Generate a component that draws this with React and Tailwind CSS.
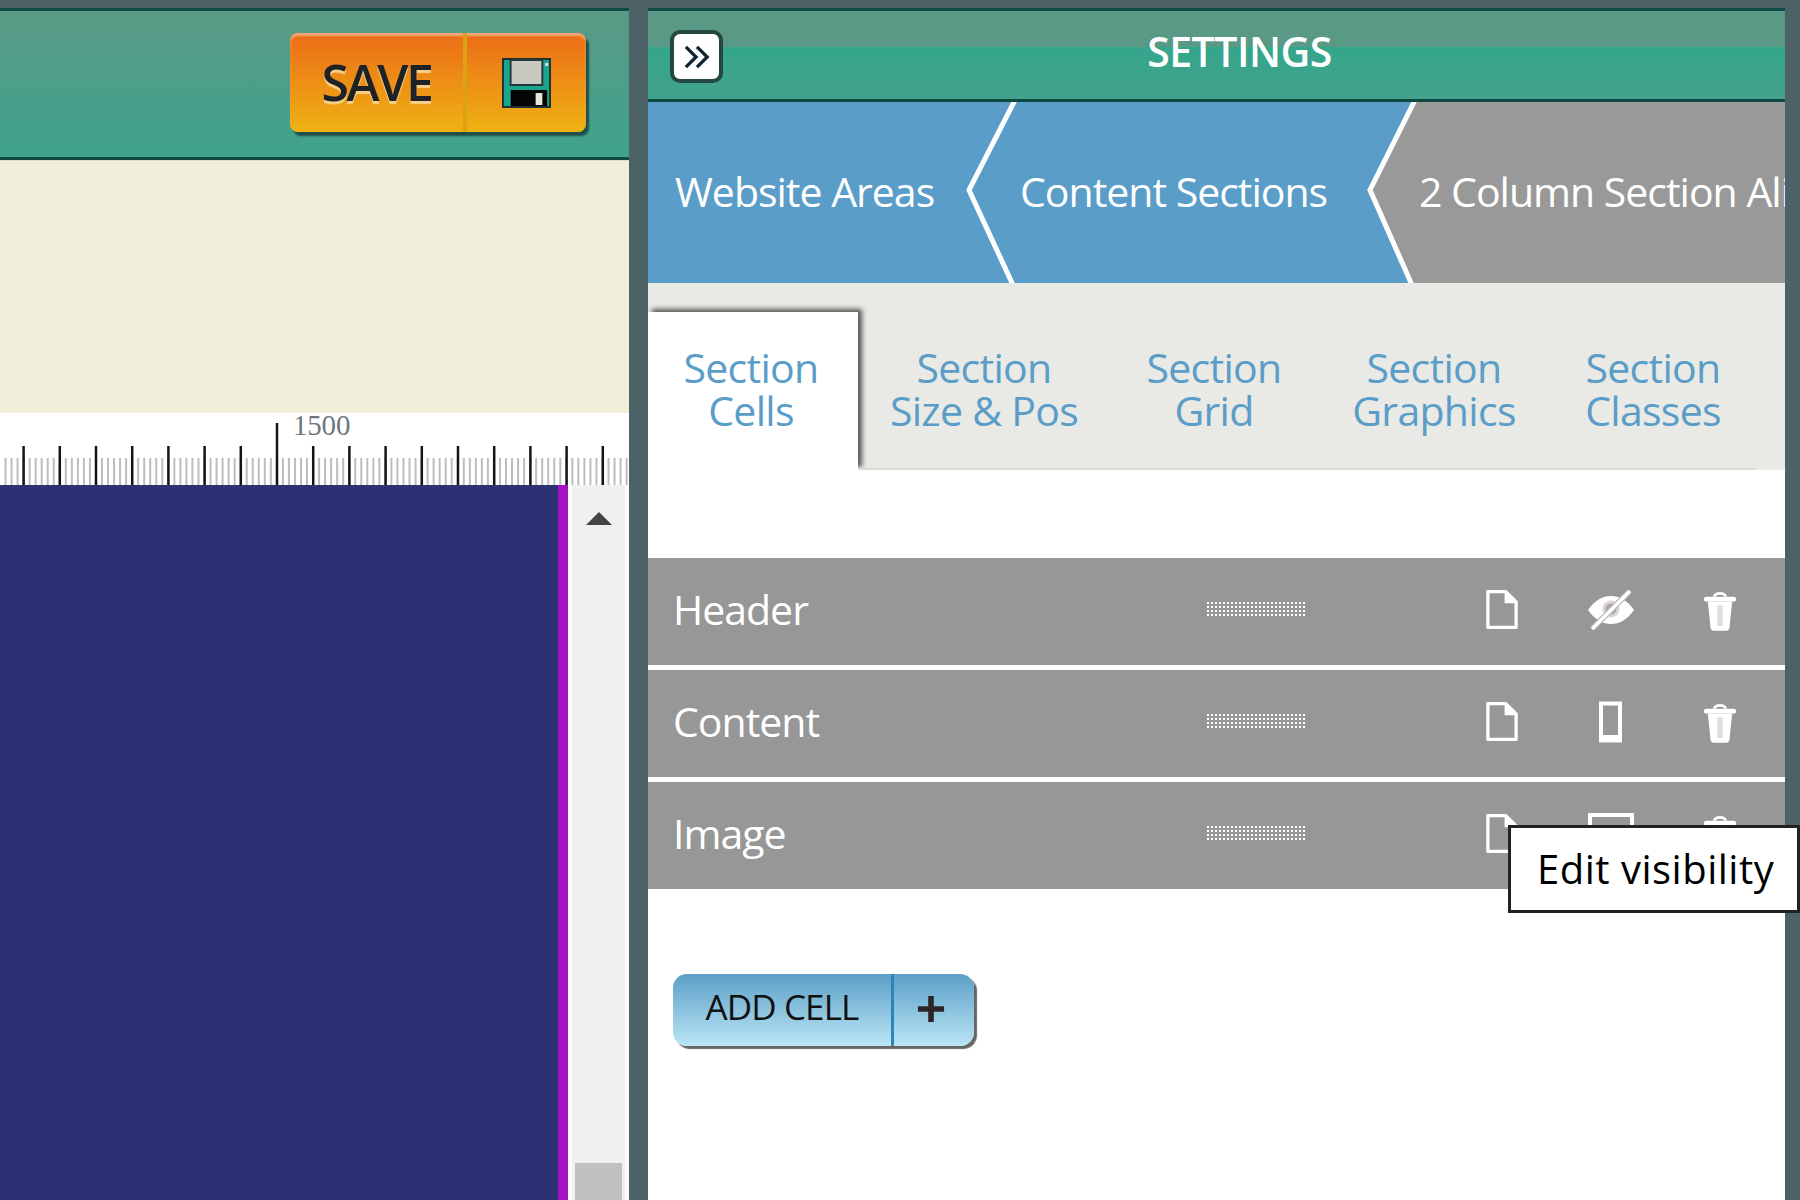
const tabs = [
  { top: "Section", bottom: "Cells", w: "w-[210px]", active: true },
  { top: "Section", bottom: "Size & Pos", w: "w-[252px]" },
  { top: "Section", bottom: "Grid", w: "w-[208px]" },
  { top: "Section", bottom: "Graphics", w: "w-[232px]" },
  { top: "Section", bottom: "Classes", w: "w-[206px]" },
];

function Floppy() {
  return (
    <svg width="49" height="50" viewBox="0 0 51 50" preserveAspectRatio="none">
      <rect x="1" y="1" width="49" height="48" fill="#1aa68c" stroke="#1f3034" strokeWidth="2" />
      <rect x="9" y="2" width="33" height="25" fill="#c9c9c2" stroke="#26383a" strokeWidth="2" />
      <rect x="9" y="32" width="38" height="16" fill="#050505" />
      <rect x="35" y="35" width="7" height="12" fill="#e8e6d8" />
      <rect x="45" y="5" width="3" height="3" fill="#e0e0e0" />
    </svg>
  );
}

function Ruler() {
  const minor = [];
  for (let i = -3; i < 105; i++) minor.push(23.6 + i * 6.03);
  const medium = [];
  for (let i = 0; i < 17; i++) medium.push(23.6 + i * 36.2);
  return (
    <svg width="629" height="72" viewBox="0 0 629 72" className="block">
      {minor.map((x, i) => (
        <line key={i} x1={x} x2={x} y1="45" y2="72" stroke="#bdbdbd" strokeWidth="2" />
      ))}
      {medium.map((x, i) => (
        <line key={i} x1={x} x2={x} y1={i === 7 ? 10 : 33} y2="72" stroke="#141414" strokeWidth="2.5" />
      ))}
    </svg>
  );
}

function FileIcon() {
  return (
    <svg width="32" height="41" viewBox="0 0 34 42" fill="none" stroke="#fff" strokeWidth="3.5">
      <path d="M2 2H21L32 13V40H2Z" strokeLinejoin="round" />
      <path d="M21 2V13H32" fill="#fff" strokeWidth="2.5" />
    </svg>
  );
}

function EyeOffIcon() {
  return (
    <svg width="48" height="42" viewBox="0 0 48 42">
      <path d="M1 21C8 11 16 7 24 7S40 11 47 21C40 31 32 35 24 35S8 31 1 21Z" fill="#fff" />
      <circle cx="24" cy="20" r="7" fill="#a8a8a8" stroke="#ddd2dd" strokeWidth="3" />
      <path d="M42 3L6 39" stroke="#b5b5b5" strokeWidth="6" />
      <path d="M43 2L5 40" stroke="#fff" strokeWidth="3.5" />
    </svg>
  );
}

function TrashIcon() {
  return (
    <svg width="32" height="44" viewBox="0 0 34 44">
      <path d="M11 8C11 3 23 3 23 8" fill="none" stroke="#fff" strokeWidth="3" />
      <rect x="0" y="8" width="34" height="5" rx="2" fill="#fff" />
      <path d="M4 13H30L27 41C27 43 25 44 23 44H11C9 44 7 43 7 41Z" fill="#fff" />
      <path d="M17 17V39" stroke="#e3dde3" strokeWidth="6" />
    </svg>
  );
}

function PhoneIcon() {
  return (
    <svg width="23" height="42" viewBox="0 0 23 42" fill="none">
      <rect x="2" y="2.5" width="19" height="37" stroke="#fff" strokeWidth="4" />
      <rect x="2" y="34" width="19" height="6" fill="#fff" />
    </svg>
  );
}

function MonitorIcon() {
  return (
    <svg width="46" height="42" viewBox="0 0 46 42" fill="none">
      <rect x="2" y="2" width="42" height="30" stroke="#fff" strokeWidth="4" />
    </svg>
  );
}

function Grip() {
  const dots = [];
  for (let r = 0; r < 4; r++) {
    for (let c = 0; c < 25; c++) {
      dots.push(<rect key={r + "-" + c} x={c * 4} y={r * 4} width="2" height="2" fill="#fff" />);
    }
  }
  return (
    <svg width="99" height="14" viewBox="0 0 99 14">
      {dots}
    </svg>
  );
}

function CellRow({ name, icon }) {
  return (
    <div className="flex h-[107px] items-center bg-[#979797] text-white">
      <div className="w-[559px] -translate-y-[2px] pl-[25px] text-[41px] font-medium leading-none tracking-[-1px]">{name}</div>
      <div className="flex w-[99px] -translate-y-[3px]">
        <Grip />
      </div>
      <div className="ml-[141px] flex w-[109px] -translate-y-[2px] justify-center">
        <FileIcon />
      </div>
      <div className="flex w-[109px] -translate-y-[2px] justify-center">{icon}</div>
      <div className="flex w-[109px] -translate-y-[2px] justify-center">
        <TrashIcon />
      </div>
    </div>
  );
}

export default function App() {
  return (
    <div className="flex h-[1200px] w-[1800px] gap-[19px] overflow-hidden bg-[#4c6267] pt-[8px] font-['Open_Sans',sans-serif]">
      {/* left: canvas */}
      <div className="flex w-[629px] flex-col">
        <div className="flex h-[152px] items-start justify-end border-y-[3px] border-[#0f4a44] bg-[linear-gradient(#5a9a86,#3fa38c)] pr-[43px] pt-[22px]">
          <div className="flex h-[99px] w-[296px] rounded-[8px] bg-[linear-gradient(#ec6c18,#eeb212)] shadow-[3px_4px_2px_#1e4f48,inset_0_3px_2px_#f2a878]">
            <div className="flex w-[177px] items-center justify-center border-r-[4px] border-[#dba311] text-[50px] font-semibold tracking-[-2.4px] text-[#1e2226] [text-shadow:0_3px_1px_#f6d08a]">
              SAVE
            </div>
            <div className="flex flex-1 items-center justify-center">
              <Floppy />
            </div>
          </div>
        </div>
        <div className="h-[253px] border-t border-[#dcdccc] bg-[#f0efd9]" />
        <div className="relative h-[72px] bg-white">
          <Ruler />
          <span className="absolute left-[293px] -top-[1px] font-['Liberation_Serif',serif] text-[29px] leading-[26px] tracking-[-0.2px] text-[#6f7680]">
            1500
          </span>
        </div>
        <div className="flex flex-1">
          <div className="w-[558px] bg-[#2b3173]" />
          <div className="w-[10px] bg-[#a511c4]" />
          <div className="flex flex-1 flex-col justify-between border-x-[4px] border-white bg-[#f0f0f0] px-[3px]">
            <div className="mx-auto mt-[27px] h-0 w-0 border-x-[13px] border-b-[13px] border-x-transparent border-b-[#444]" />
            <div className="h-[37px] bg-[#c0c0c0]" />
          </div>
        </div>
      </div>

      {/* right: settings */}
      <div className="flex w-[1137px] flex-col bg-white">
        <div className="relative flex h-[94px] items-center justify-center border-y-[3px] border-y-[#0d4a44] bg-[linear-gradient(#5a9985_0,#5a9985_41%,#33a68b_41%,#44a28c_100%)] pl-[46px] text-[41px] font-semibold leading-none tracking-[-0.5px] text-white">
          <div className="absolute left-[22px] top-[19px] flex h-[53px] w-[53px] items-center justify-center rounded-[10px] border-[4px] border-[#24483f] bg-white">
            <svg width="28" height="26" viewBox="0 0 30 28" fill="none" stroke="#123" strokeWidth="3.5">
              <path d="M3 3L14 14L3 25" />
              <path d="M15 3L26 14L15 25" />
            </svg>
          </div>
          <span className="-translate-y-[4px]">SETTINGS</span>
        </div>

        <div className="relative flex h-[181px] items-center overflow-hidden bg-[#5a9dc8] pb-[3px] text-[41px] font-medium leading-none tracking-[-1px] text-white">
          <div className="w-[318px] shrink-0 pl-[27px] whitespace-nowrap">Website Areas</div>
          <div className="w-[402px] shrink-0 pl-[54px] whitespace-nowrap">Content Sections</div>
          <div className="absolute inset-y-0 left-[720px] right-0 bg-[#999] [clip-path:polygon(48px_0,100%_0,100%_100%,46px_100%,0_50%)]" />
          <div className="relative ml-[51px] whitespace-nowrap">2 Column Section Alignment</div>
          <svg className="absolute left-0 top-0" width="800" height="181" viewBox="0 0 800 181" fill="none" stroke="#fff" strokeWidth="5">
            <path d="M367 -2L321 88L365 183" />
            <path d="M767 -2L722 88L764 183" />
          </svg>
        </div>

        <div className="flex h-[187px] items-end overflow-hidden bg-[#e9e9e5] text-center text-[41px] font-medium leading-[43px] tracking-[-0.7px] text-[#5a9dc8]">
          {tabs.map((t) => (
            <div
              key={t.bottom}
              className={
                t.w +
                " flex h-[158px] flex-col items-center pt-[34px] " +
                (t.active ? "bg-white pr-[4px] shadow-[4px_-3px_5px_#555]" : "border-b-2 border-[#dddcd8]")
              }
            >
              <div>{t.top}</div>
              <div>{t.bottom}</div>
            </div>
          ))}
        </div>

        <div className="relative flex flex-col gap-[5px] pt-[88px]">
          <CellRow name="Header" icon={<EyeOffIcon />} />
          <CellRow name="Content" icon={<PhoneIcon />} />
          <CellRow name="Image" icon={<MonitorIcon />} />
          <div className="absolute left-[860px] top-[355px] z-10 flex h-[88px] w-[292px] items-center border-[3px] border-[#222] bg-white pl-[26px] text-[40px] leading-none tracking-[0.5px] text-black">
            Edit visibility
          </div>
        </div>

        <div className="ml-[25px] mt-[85px] flex h-[72px] w-[301px] rounded-[14px] bg-[linear-gradient(#5c9fc8,#bbe6f5)] shadow-[3px_3px_1px_#666]">
          <div className="flex w-[221px] items-center justify-center border-r-[3px] border-[#2a85b8] pb-[8px] text-[35px] font-medium leading-none tracking-[-0.9px] text-[#111]">
            ADD CELL
          </div>
          <div className="flex flex-1 items-center justify-center pb-[3px] pr-[6px]">
            <svg width="28" height="28" viewBox="0 0 30 30" stroke="#2c2428" strokeWidth="6">
              <path d="M15 1V29M1 15H29" />
            </svg>
          </div>
        </div>
      </div>
    </div>
  );
}
